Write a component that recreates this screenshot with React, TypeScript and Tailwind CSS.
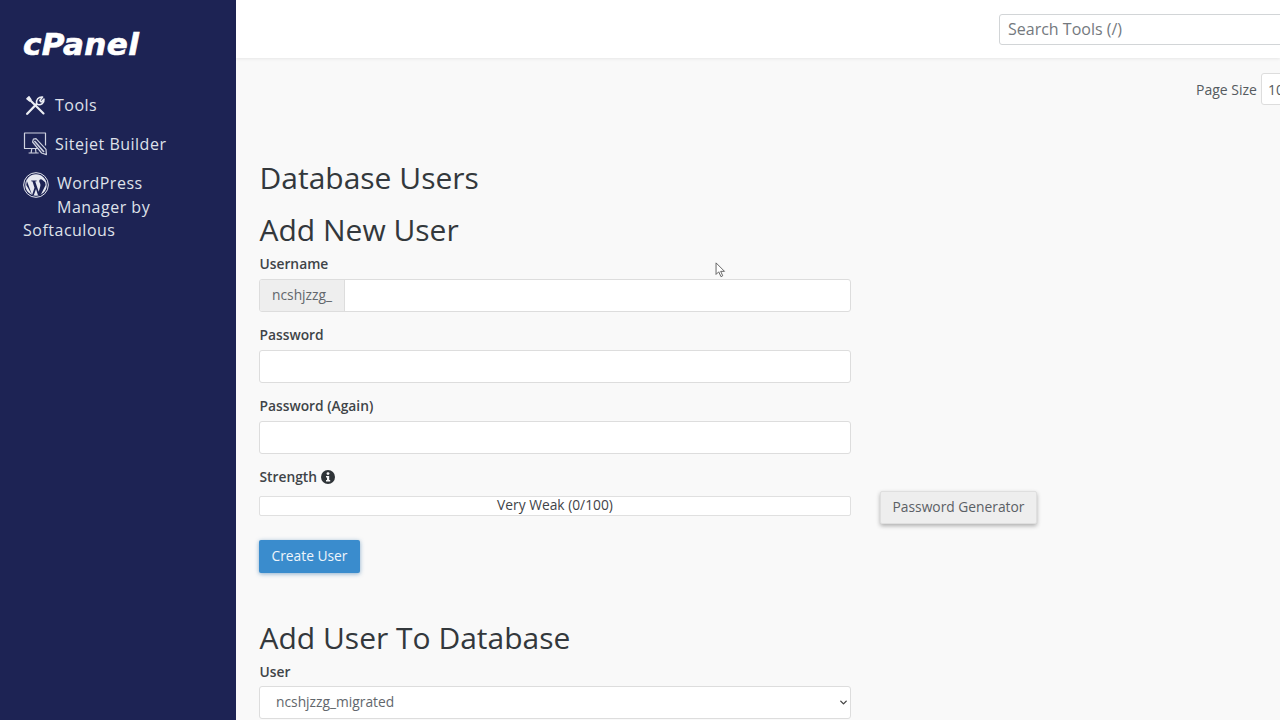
import { ChevronDown } from "lucide-react";

function Label({ children }: { children: React.ReactNode }) {
  return <label className="ml-[0.5px] block h-[20px] text-[13.8px] leading-[20px] font-semibold text-[#3f4448]">{children}</label>;
}

function TextField() {
  return <input className="block w-[592px] h-[33px] bg-white border border-[#dddddd] rounded-[3px]" />;
}

function ToolsIcon() {
  return (
    <svg viewBox="0 0 24 24" className="w-[24px] h-[24px] shrink-0" fill="none" stroke="#eceef4" strokeLinecap="round" strokeLinejoin="round">
      {/* screwdriver */}
      <path d="M6.5 6.5 L20.5 20.5" strokeWidth="2.1" />
      <path d="M3.8 5.8 L6 3.6 L8 6.5 L6.5 8 Z" strokeWidth="1.3" fill="#eceef4" />
      {/* wrench */}
      <path d="M4.2 20.8 L13.6 11" strokeWidth="2.3" />
      <path d="M13.6 11 C12.6 7 15.5 3.5 19.6 4 L16.8 7.4 L18.2 9 L21 6 C21.4 10 18 12.3 14.8 11.6" strokeWidth="1.5" />
    </svg>
  );
}

function SitejetIcon() {
  return (
    <svg viewBox="0 0 24 24" className="w-[24px] h-[24px] shrink-0" fill="none" stroke="#cfd2e0" strokeWidth="1.2" strokeLinejoin="round">
      <path d="M15 16.5 H1.5 V1 H22.5 V13.5" />
      <path d="M8.8 16.5 L8.2 20.5 M12.4 16.5 L13 20.5 M5.6 21 H15.6" />
      <path d="M10.4 7.2 L13 6.6 L23 17.4 L23.4 22.6 L18.6 21 L9.6 10 Z" fill="#1d2354" strokeWidth="1.2" />
      <path d="M11.4 9 L21 20" strokeWidth="1.6" />
    </svg>
  );
}

function WordPressIcon() {
  return (
    <svg viewBox="0 0 24 24" className="w-[26px] h-[26px]">
      <circle cx="12" cy="12" r="11.4" fill="none" stroke="#e6e8f0" strokeWidth="0.9" />
      <circle cx="12" cy="12" r="9.9" fill="#e6e8f0" />
      <path d="M3.6 8.4 L8.4 21.2 L10.6 14.6 L8.8 8.8 L7.6 8.6 L7.6 7.8 L12.6 7.8 L12.6 8.6 L11.3 8.8 L14.5 18.3 L15.8 13.9 C16.4 11.8 16 10.6 15.2 9.4 C14.5 8.2 15.2 6.8 16.6 6.8 L17.4 6.9 L20.4 9.4 L20.9 12 L16.4 21 L13.9 21.8 L12 15.6 L9.9 21.7 L8.4 21.2 L3 12 Z" fill="#1d2354" />
    </svg>
  );
}

function InfoDot() {
  return (
    <svg viewBox="0 0 14 14" className="h-[14px] w-[14px] shrink-0">
      <circle cx="7" cy="7" r="7" fill="#2f3438" />
      <circle cx="7" cy="3.6" r="1.4" fill="#f9f9f9" />
      <path d="M5 6 H8.2 V10 H9.2 V11.4 H5 V10 H6 V7.4 H5 Z" fill="#f9f9f9" />
    </svg>
  );
}

export default function App() {
  return (
    <div className="relative flex h-[720px] w-[1280px] overflow-hidden bg-[#f9f9f9] font-['Open_Sans',sans-serif]">
      {/* Sidebar */}
      <aside className="w-[236px] shrink-0 bg-[#1d2354] px-[23px] pt-[24px] text-[#dfe1ea]">
        <div className="h-[40px] text-[31px] leading-[40px] font-bold italic text-white tracking-[0.4px] [-webkit-text-stroke:0.7px_white] font-['DejaVu_Sans',sans-serif]">
          cPanel
        </div>
        <nav className="mt-[21px] text-[16px] tracking-[0.5px]">
          <a className="flex h-[39px] items-center gap-[8px]">
            <ToolsIcon />
            <span>Tools</span>
          </a>
          <a className="flex h-[40px] items-center gap-[8px]">
            <SitejetIcon />
            <span>Sitejet Builder</span>
          </a>
          <a className="mt-[8px] block w-[150px] leading-[23.5px]">
            <span className="float-left mr-[8px] h-[47px]">
              <WordPressIcon />
            </span>
            WordPress Manager by Softaculous
          </a>
        </nav>
      </aside>

      <div className="min-w-0 flex-1">
        {/* Top bar */}
        <header className="flex h-[58px] items-center bg-white pl-[763px] shadow-[0_1px_3px_rgba(0,0,0,0.08)]">
          <input
            placeholder="Search Tools (/)"
            className="h-[31px] w-[300px] shrink-0 rounded-[3px] border border-[#d2d5d7] bg-white px-[8px] text-[16px] placeholder:text-[#74797e]"
          />
        </header>

        <main className="px-[23px]">
          <div className="flex h-[34px] mt-[14px] items-center pl-[937px] whitespace-nowrap text-[14px] text-[#555b60]">
            <span>Page Size</span>
            <span className="ml-[4px] flex h-[32px] w-[60px] shrink-0 items-center rounded-[3px] border border-[#dddddd] bg-white pl-[6px]">
              100
            </span>
          </div>

          <h1 className="ml-[0.5px] mt-[52px] text-[30px] leading-[40px] text-[#33383c]">Database Users</h1>
          <h2 className="ml-[0.5px] mt-[12px] text-[30px] leading-[40px] text-[#33383c]">Add New User</h2>

          <div className="mt-[4px]">
            <Label>Username</Label>
          </div>
          <div className="mt-[5px] flex h-[33px] w-[592px] overflow-hidden rounded-[3px] border border-[#dddddd] bg-white">
            <span className="flex w-[85px] items-center border-r border-[#dddddd] bg-[#eeeeee] pb-[1px] pl-[12px] text-[13.8px] text-[#62676c]">
              ncshjzzg_
            </span>
            <input className="min-w-0 flex-1" />
          </div>

          <div className="mt-[13px]">
            <Label>Password</Label>
          </div>
          <div className="mt-[5px]">
            <TextField />
          </div>

          <div className="mt-[13px]">
            <Label>Password (Again)</Label>
          </div>
          <div className="mt-[5px]">
            <TextField />
          </div>

          <div className="mt-[13px] flex items-center gap-[4px]">
            <Label>Strength</Label>
            <InfoDot />
          </div>

          <div className="mt-[1px] flex items-center gap-[29px]">
            <div className="flex h-[20px] w-[592px] items-center justify-center rounded-[2px] border border-[#e0e0e0] bg-white pb-[1px] text-[13.8px] text-[#3f4448]">
              Very Weak (0/100)
            </div>
            <button className="mt-[3px] h-[33px] w-[157px] rounded-[2px] border border-[#dfdfdf] bg-[#eeeeee] text-[13.8px] text-[#5b6065] shadow-[0_2px_4px_rgba(0,0,0,0.3)]">
              Password Generator
            </button>
          </div>

          <button className="mt-[16px] block h-[33px] w-[101px] rounded-[2px] bg-[#3a8ccd] text-[13.8px] text-[#eef5fb] shadow-[0_1px_4px_rgba(30,100,160,0.5)]">
            Create User
          </button>

          <h2 className="ml-[0.5px] mt-[45px] text-[30px] leading-[40px] text-[#33383c]">Add User To Database</h2>
          <div className="mt-[4px]">
            <Label>User</Label>
          </div>
          <div className="mt-[4px] flex h-[33px] w-[592px] items-center justify-between rounded-[3px] border border-[#dddddd] bg-white pl-[16px] pr-[1px] text-[13.8px] text-[#62676c]">
            <span>ncshjzzg_migrated</span>
            <ChevronDown size={11} strokeWidth={3} className="text-[#444]" />
          </div>
        </main>
      </div>

      {/* Mouse pointer */}
      <svg viewBox="0 0 12 18" className="absolute left-[715px] top-[262px] h-[16px] w-[11px]" fill="white" stroke="#555" strokeWidth="1">
        <path d="M1 1 V14 L4 11 L6.5 16.5 L8.5 15.5 L6.2 10.5 H10.5 Z" />
      </svg>
    </div>
  );
}
